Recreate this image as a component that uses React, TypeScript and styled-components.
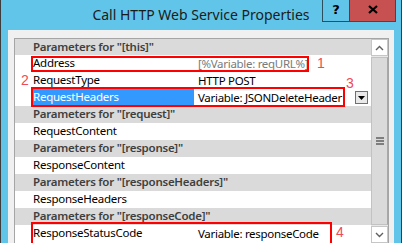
import React from "react";
import styled, { createGlobalStyle } from "styled-components";

const GlobalStyle = createGlobalStyle`
    html, body {
        margin: 0;
        padding: 0;
        background: #ffffff;
    }
    * {
        box-sizing: border-box;
    }
`;

const UI_FONT = `"Noto Sans", "Open Sans", sans-serif`;

const Window = styled.div`
    position: relative;
    width: 402px;
    height: 243px;
    overflow: hidden;
    display: flex;
    flex-direction: column;
    background: #60c5e8;
    border-left: 1px solid #3d3d3d;
    border-right: 1px solid #3d3d3d;
    font-family: ${UI_FONT};
`;

const TitleBar = styled.div`
    height: 30px;
    flex: 0 0 30px;
    display: grid;
    grid-template-columns: 1fr auto 1fr;
`;

const Title = styled.div`
    grid-column: 2;
    padding-top: 5px;
    font-size: 14px;
    color: #1b1b1b;
    white-space: nowrap;
`;

const Controls = styled.div`
    grid-column: 3;
    justify-self: end;
    display: flex;
    align-items: flex-start;
    padding-right: 5px;
`;

const CaptionButton = styled.div<{ $close?: boolean }>`
    width: ${({ $close }) => ($close ? "47px" : "28px")};
    height: 22px;
    display: flex;
    align-items: center;
    justify-content: center;
    background: ${({ $close }) => ($close ? "#c75050" : "#60c5e8")};
    border: 1px solid #2c4f5e;
    border-top: none;
    margin-left: ${({ $close }) => ($close ? "-1px" : "0")};
    font-family: "DejaVu Sans", sans-serif;
    font-weight: bold;
    font-size: 13px;
    color: #000;
    padding-bottom: 2px;
`;

const Body = styled.div`
    flex: 1;
    margin: 0 7px;
    background: #f0f0f0;
    padding: 8px 5px 0 6px;
    display: flex;
`;

const ListBox = styled.div`
    flex: 1;
    display: grid;
    grid-template-columns: 1fr 17px;
    align-items: start;
    border: 1px solid #a5a5a5;
    border-bottom: none;
    background: #ffffff;
    letter-spacing: -0.25px;
`;

const Rows = styled.div`
    display: flex;
    flex-direction: column;
`;

const HeaderRow = styled.div<{ $first?: boolean }>`
    height: ${({ $first }) => ($first ? "16px" : "17px")};
    line-height: ${({ $first }) => ($first ? "15px" : "16px")};
    padding-left: 18px;
    background: #dadada;
    color: #3f3f3f;
    font-size: 11.5px;
    font-weight: 600;
    white-space: nowrap;
    overflow: hidden;
`;

const ItemRow = styled.div`
    height: 17px;
    display: grid;
    grid-template-columns: 16px 163px 1fr;
    background: #ffffff;
    font-size: 11.5px;
`;

const NameCell = styled.div<{ $selected?: boolean }>`
    grid-column: 2;
    padding-left: 2px;
    line-height: 16px;
    color: ${({ $selected }) => ($selected ? "#ffffff" : "#000000")};
    background: ${({ $selected }) => ($selected ? "#3399ff" : "transparent")};
    white-space: nowrap;
`;

const ValueCell = styled.div<{ $muted?: boolean }>`
    display: flex;
    align-items: center;
    padding-left: 4px;
    padding-right: 3px;
    letter-spacing: -0.3px;
    color: ${({ $muted }) => ($muted ? "#7a7a7a" : "#000000")};
    white-space: nowrap;
    overflow: hidden;
`;

const DropButton = styled.div`
    margin-left: auto;
    width: 13px;
    height: 13px;
    flex: 0 0 13px;
    display: flex;
    align-items: center;
    justify-content: center;
    background: #e9e9e9;
    border: 1px solid #707070;
`;

const ScrollBar = styled.div`
    display: flex;
    flex-direction: column;
    background: #e8e8e8;
    height: 204px;
`;

const ScrollButton = styled.div`
    width: 17px;
    height: 17px;
    flex: 0 0 17px;
    display: flex;
    align-items: center;
    justify-content: center;
    background: #ffffff;
    border: 1px solid #c6c6c6;
`;

const Thumb = styled.div`
    flex: 1;
    margin: 1px 0;
    display: flex;
    align-items: center;
    justify-content: center;
    background: #dadada;
    border: 1px solid #c2c2c2;
    border-right-color: #a8a8a8;
`;

const RedBox = styled.div`
    position: absolute;
    border: 2px solid #ff0000;
    pointer-events: none;
`;

const Marker = styled.div`
    position: absolute;
    font-family: "Liberation Sans", sans-serif;
    font-size: 14px;
    line-height: 14px;
    color: #ef4a57;
`;

type Item =
    | { kind: "header"; label: string }
    | { kind: "item"; name: string; value?: string; muted?: boolean; selected?: boolean };

const items: Item[] = [
    { kind: "header", label: 'Parameters for "[this]"' },
    { kind: "item", name: "Address", value: "[%Variable: reqURL%]", muted: true },
    { kind: "item", name: "RequestType", value: "HTTP POST" },
    { kind: "item", name: "RequestHeaders", value: "Variable: JSONDeleteHeader", selected: true },
    { kind: "header", label: 'Parameters for "[request]"' },
    { kind: "item", name: "RequestContent" },
    { kind: "header", label: 'Parameters for "[response]"' },
    { kind: "item", name: "ResponseContent" },
    { kind: "header", label: 'Parameters for "[responseHeaders]"' },
    { kind: "item", name: "ResponseHeaders" },
    { kind: "header", label: 'Parameters for "[responseCode]"' },
    { kind: "item", name: "ResponseStatusCode", value: "Variable: responseCode" },
];

const annotations = [
    { left: 31, top: 56, width: 278, height: 16 },
    { left: 31, top: 87, width: 314, height: 20 },
    { left: 31, top: 222, width: 301, height: 25 },
];

const markers = [
    { n: "1", left: 317, top: 56 },
    { n: "2", left: 21, top: 73 },
    { n: "3", left: 346, top: 76 },
    { n: "4", left: 336, top: 225 },
];

const Chevron = ({ up }: { up?: boolean }) => (
    <svg width="9" height="6" viewBox="0 0 9 6">
        <polyline
            points={up ? "1,5 4.5,1.5 8,5" : "1,1 4.5,4.5 8,1"}
            fill="none"
            stroke="#606060"
            strokeWidth="1.4"
        />
    </svg>
);

export default function App() {
    return (
        <>
            <GlobalStyle />
            <Window>
                <TitleBar>
                    <Title>Call HTTP Web Service Properties</Title>
                    <Controls>
                        <CaptionButton>?</CaptionButton>
                        <CaptionButton $close>
                            <svg width="10" height="9" viewBox="0 0 10 9">
                                <path d="M1 1 L9 8 M9 1 L1 8" stroke="#000" strokeWidth="2.2" />
                            </svg>
                        </CaptionButton>
                    </Controls>
                </TitleBar>
                <Body>
                    <ListBox>
                        <Rows>
                            {items.map((it, i) =>
                                it.kind === "header" ? (
                                    <HeaderRow key={i} $first={i === 0}>
                                        {it.label}
                                    </HeaderRow>
                                ) : (
                                    <ItemRow key={i}>
                                        <NameCell $selected={it.selected}>{it.name}</NameCell>
                                        <ValueCell $muted={it.muted}>
                                            {it.value}
                                            {it.selected && (
                                                <DropButton>
                                                    <svg width="7" height="4" viewBox="0 0 7 4">
                                                        <path d="M0 0 L7 0 L3.5 4 Z" fill="#000" />
                                                    </svg>
                                                </DropButton>
                                            )}
                                        </ValueCell>
                                    </ItemRow>
                                )
                            )}
                        </Rows>
                        <ScrollBar>
                            <ScrollButton>
                                <Chevron up />
                            </ScrollButton>
                            <Thumb>
                                <svg width="8" height="8" viewBox="0 0 8 8">
                                    <path d="M0 1 H8 M0 4 H8 M0 7 H8" stroke="#606060" strokeWidth="1.4" />
                                </svg>
                            </Thumb>
                            <ScrollButton>
                                <Chevron />
                            </ScrollButton>
                        </ScrollBar>
                    </ListBox>
                </Body>
                {annotations.map((a, i) => (
                    <RedBox key={i} style={{ left: a.left - 1, top: a.top, width: a.width, height: a.height }} />
                ))}
                {markers.map((m) => (
                    <Marker key={m.n} style={{ left: m.left - 1, top: m.top }}>
                        {m.n}
                    </Marker>
                ))}
            </Window>
        </>
    );
}
